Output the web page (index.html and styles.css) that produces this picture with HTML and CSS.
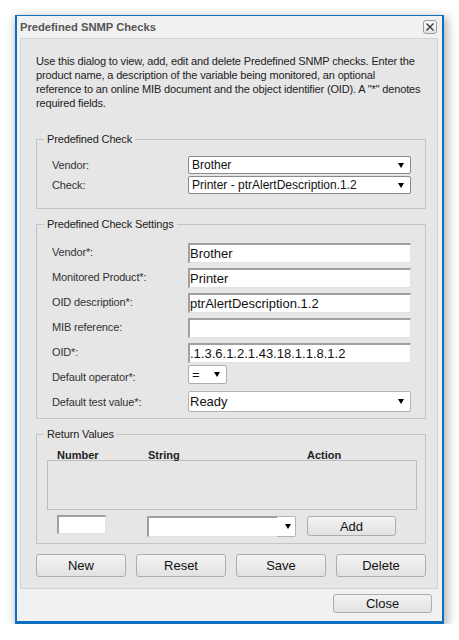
FILE: index.html
```html
<!DOCTYPE html>
<html>
<head>
<meta charset="utf-8">
<title>Predefined SNMP Checks</title>
<link rel="stylesheet" href="styles.css">
</head>
<body>
<div class="window">
  <div class="titlebar">
    <span class="title">Predefined SNMP Checks</span>
    <span class="xbtn"><svg width="12" height="12" viewBox="0 0 12 12"><path d="M2.5 2.5L9.5 9.5M9.5 2.5L2.5 9.5" stroke="#3a3a3a" stroke-width="1.4" fill="none"/></svg></span>
  </div>
  <div class="panel">
    <p class="intro">Use this dialog to view, add, edit and delete Predefined SNMP checks. Enter the<br>product name, a description of the variable being monitored, an optional<br>reference to an online MIB document and the object identifier (OID). A "*" denotes<br>required fields.</p>

    <fieldset class="group g1">
      <legend>Predefined Check</legend>
      <div class="fs-body">
        <div class="row1">
          <span class="lbl">Vendor:</span>
          <div class="select sel-dark"><span>Brother</span><svg class="arr" width="6" height="5" viewBox="0 0 6 5"><path d="M0 0H6L3 5Z" fill="#000"/></svg></div>
        </div>
        <div class="row1">
          <span class="lbl">Check:</span>
          <div class="select sel-dark"><span>Printer - ptrAlertDescription.1.2</span><svg class="arr" width="6" height="5" viewBox="0 0 6 5"><path d="M0 0H6L3 5Z" fill="#000"/></svg></div>
        </div>
      </div>
    </fieldset>

    <fieldset class="group g2">
      <legend>Predefined Check Settings</legend>
      <div class="fs-body grid2">
        <span class="lbl">Vendor*:</span>
        <input class="field" type="text" value="Brother">
        <span class="lbl">Monitored Product*:</span>
        <input class="field" type="text" value="Printer">
        <span class="lbl">OID description*:</span>
        <input class="field" type="text" value="ptrAlertDescription.1.2">
        <span class="lbl">MIB reference:</span>
        <input class="field" type="text" value="">
        <span class="lbl">OID*:</span>
        <input class="field" type="text" value=".1.3.6.1.2.1.43.18.1.1.8.1.2">
        <span class="lbl">Default operator*:</span>
        <div class="select sel-op"><span>=</span><svg class="arr" width="6" height="5" viewBox="0 0 6 5"><path d="M0 0H6L3 5Z" fill="#000"/></svg></div>
        <span class="lbl">Default test value*:</span>
        <div class="select sel-val"><span>Ready</span><svg class="arr" width="6" height="5" viewBox="0 0 6 5"><path d="M0 0H6L3 5Z" fill="#000"/></svg></div>
      </div>
    </fieldset>

    <fieldset class="group g3">
      <legend>Return Values</legend>
      <div class="fs-body">
        <div class="cols heads">
          <span>Number</span>
          <span>String</span>
          <span>Action</span>
        </div>
        <div class="listbox"></div>
        <div class="cols addrow">
          <input class="field num" type="text" value="">
          <div class="combo">
            <span class="combo-field"></span>
            <span class="combo-btn"><svg class="arr" width="6" height="5" viewBox="0 0 6 5"><path d="M0 0H6L3 5Z" fill="#000"/></svg></span>
          </div>
          <button class="btn add">Add</button>
        </div>
      </div>
    </fieldset>

    <div class="actions">
      <button class="btn act">New</button>
      <button class="btn act">Reset</button>
      <button class="btn act">Save</button>
      <button class="btn act">Delete</button>
    </div>
  </div>
  <div class="footer">
    <button class="btn close">Close</button>
  </div>
</div>
</body>
</html>
```

FILE: styles.css
```css
* { box-sizing: border-box; }

html, body {
  margin: 0;
  padding: 0;
  background: #ffffff;
}

body {
  font-family: "Liberation Sans", Arial, sans-serif;
  font-size: 11px;
  color: #222222;
}

.window {
  margin: 15px 0 0 15px;
  width: 429px;
  height: 609px;
  border-style: solid;
  border-color: #0e6fc1;
  border-width: 1px 2px 3px 2px;
  background: #f1f1f1;
  box-shadow: 2px 3px 10px 1px rgba(0, 0, 0, 0.32);
  display: flex;
  flex-direction: column;
}

.titlebar {
  height: 22px;
  flex: none;
  display: flex;
  align-items: center;
  justify-content: space-between;
  padding: 0 5px 0 3px;
}

.title {
  font-weight: bold;
  font-size: 11.2px;
  color: #555555;
  margin-top: -1px;
}

.xbtn {
  width: 14px;
  height: 14px;
  align-self: flex-start;
  margin-top: 4px;
  border: 1px solid #9c9c9c;
  border-radius: 3px;
  background: linear-gradient(#fdfdfd, #e3e3e3);
  display: flex;
  align-items: center;
  justify-content: center;
}

.panel {
  flex: none;
  margin: 0 4px 0 3px;
  border: 1px solid #d3d3d3;
  background: #e6e6e6;
  padding: 15px 11px 11px 15px;
}

.intro {
  margin: 0 0 23px;
  line-height: 14px;
  white-space: nowrap;
  letter-spacing: -0.15px;
  color: #222222;
}

.group {
  margin: 0;
  padding: 0;
  min-width: 0;
  border: 1px solid #c4c4c4;
}

.group + .group { margin-top: 9px; }

.group legend {
  margin-left: 7px;
  padding: 0 3px;
  font-size: 11px;
  line-height: 13px;
  letter-spacing: -0.15px;
  color: #222222;
}

.lbl {
  color: #333333;
  letter-spacing: -0.15px;
}

/* Predefined Check */
.g1 .fs-body {
  padding: 10px 14px 14px 15px;
  display: flex;
  flex-direction: column;
  gap: 2px;
}

.row1 {
  display: flex;
  align-items: center;
  height: 18px;
}

.row1 .lbl { width: 136px; }

.select {
  display: flex;
  align-items: center;
  justify-content: space-between;
  background: #ffffff;
  color: #111111;
}

.sel-dark {
  width: 223px;
  height: 18px;
  border: 1px solid #8a8a8a;
  border-radius: 2px;
  padding: 0 6px 0 3px;
  font-size: 12px;
}

/* Predefined Check Settings */
.grid2 {
  padding: 8px 14px 4px 15px;
  display: grid;
  grid-template-columns: 136px 223px;
  grid-auto-rows: 25px;
  align-items: center;
}

.field {
  display: block;
  margin: 0;
  padding: 0;
  background: #ffffff;
  border-top: 2px solid #a0a0a0;
  border-left: 2px solid #a0a0a0;
  border-right: 1px solid #e2e2e2;
  border-bottom: 1px solid #e2e2e2;
  font-family: "Liberation Sans", Arial, sans-serif;
  font-size: 13px;
  color: #111111;
  outline: none;
}

.grid2 .field {
  width: 223px;
  height: 20px;
  align-self: start;
  margin-top: 4px;
}

.sel-op {
  width: 39px;
  height: 19px;
  align-self: start;
  margin-top: 1px;
  border: 1px solid #adadad;
  border-radius: 2px;
  padding: 0 6px 0 3px;
  font-size: 13px;
}

.sel-val {
  width: 223px;
  height: 21px;
  align-self: start;
  margin-top: 2px;
  border: 1px solid #b4b4b4;
  border-radius: 2px;
  padding: 0 6px 0 1px;
  font-size: 13px;
}

/* Return Values */
.g3 .fs-body {
  padding: 9px 8px 6px 10px;
}

.cols {
  display: grid;
  grid-template-columns: 90px 160px 89px;
  padding-left: 10px;
}

.heads {
  height: 10px;
  line-height: 11px;
  font-weight: bold;
  color: #222222;
}

.heads span:nth-child(2) { padding-left: 1px; }

.listbox {
  height: 50px;
  border: 1px solid #bdbdbd;
  background: #e6e6e6;
}

.addrow {
  margin-top: 5px;
  height: 22px;
  align-items: start;
}

.field.num {
  width: 49px;
  height: 19px;
}

.combo {
  display: flex;
  width: 149px;
  height: 21px;
  margin-top: 1px;
}

.combo-field {
  flex: 1;
  background: #ffffff;
  border-top: 2px solid #a0a0a0;
  border-left: 2px solid #a0a0a0;
  border-bottom: 1px solid #e2e2e2;
}

.combo-btn {
  width: 19px;
  background: #ffffff;
  border: 1px solid #b4b4b4;
  border-left: none;
  border-radius: 0 2px 2px 0;
  display: flex;
  align-items: center;
  justify-content: flex-start;
  padding-left: 8px;
}

/* Buttons */
.btn {
  margin: 0;
  padding: 0;
  border: 1px solid #adadad;
  border-radius: 3px;
  background: linear-gradient(#f3f3f3, #e2e2e2);
  font-family: "Liberation Sans", Arial, sans-serif;
  font-size: 13px;
  color: #111111;
  text-align: center;
}

.add {
  width: 89px;
  height: 20px;
  margin-top: 1px;
}

.actions {
  margin-top: 10px;
  display: flex;
  gap: 10px;
}

.act {
  width: 90px;
  height: 23px;
}

.footer {
  flex: none;
  height: 32px;
  display: flex;
  justify-content: flex-end;
  align-items: flex-start;
  padding: 5px 10px 0 0;
}

.close {
  width: 99px;
  height: 19px;
}

.arr { flex: none; display: block; }
```
